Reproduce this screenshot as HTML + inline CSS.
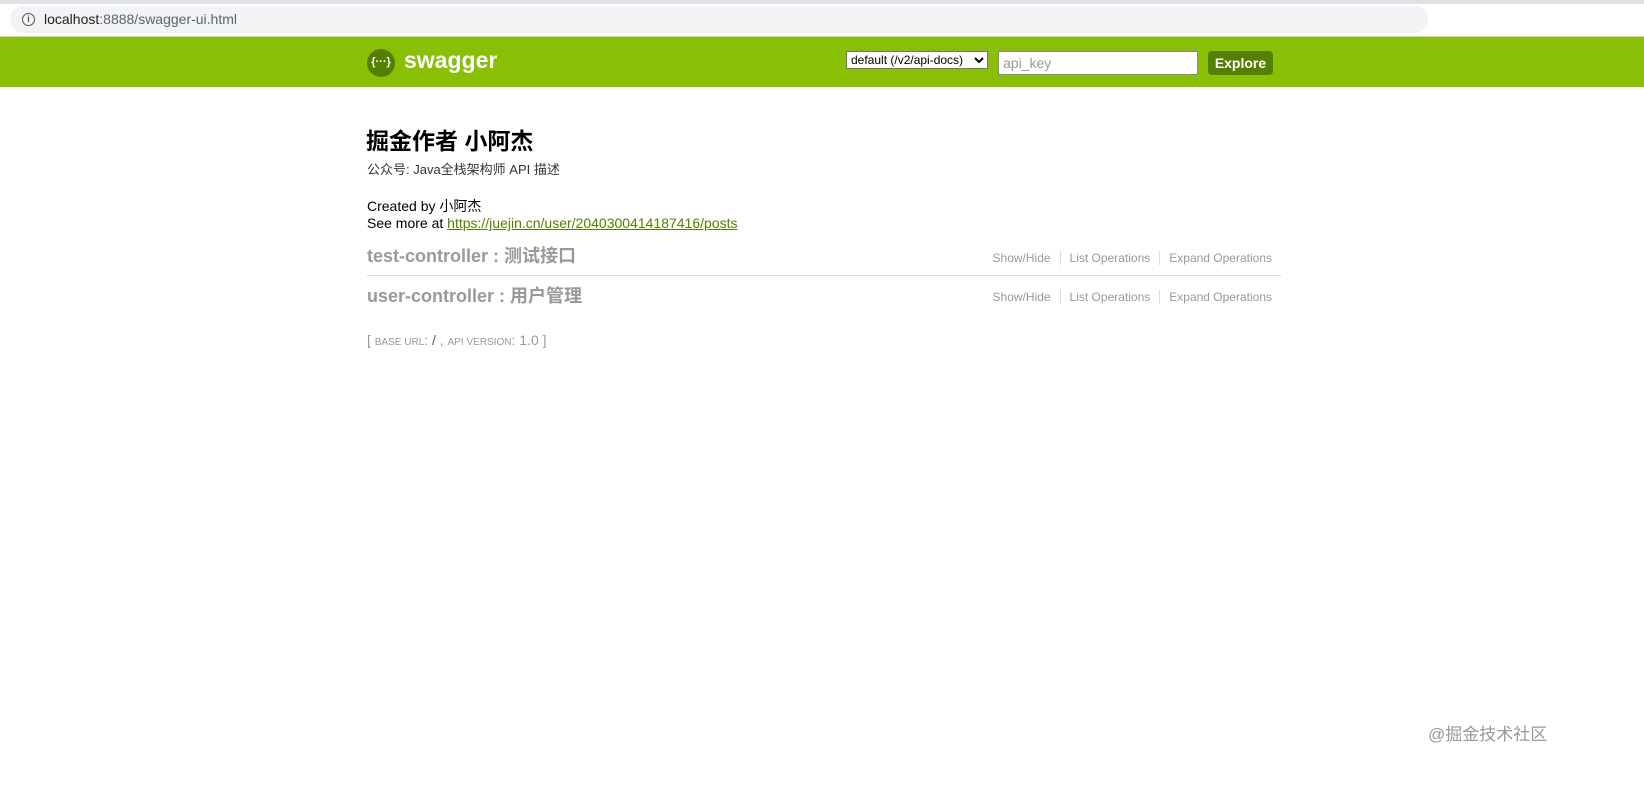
<!DOCTYPE html>
<html><head><meta charset="utf-8"><style>
*{margin:0;padding:0;box-sizing:border-box}
body{width:1644px;height:797px;background:#fff;font-family:"Liberation Sans","Noto Sans CJK SC",sans-serif;position:relative;overflow:hidden}
.chrome{position:absolute;left:0;top:0;width:1644px;height:37px;background:#fff;border-bottom:1px solid #d0d0d0}
.chrome .top{position:absolute;left:0;top:0;width:1644px;height:4px;background:#dee1e6}
.addr{position:absolute;left:10px;top:6px;width:1418px;height:27px;background:#f1f3f4;border-radius:14px}
.addr .i{position:absolute;left:12px;top:7px;width:13px;height:13px;border:1.3px solid #555;border-radius:50%;font-size:9px;text-align:center;line-height:11px;color:#555;font-weight:bold}
.addr .u{position:absolute;left:34px;top:5px;font-size:14px;color:#202124}
.addr .u span{color:#5f6368}
.hdr{position:absolute;left:0;top:37px;width:1644px;height:50px;background:#89bf04}
.logo{position:absolute;left:367px;top:49px;width:28px;height:28px;border-radius:50%;background:#547f00;color:#fff;font-size:11px;text-align:center;line-height:27px;font-weight:bold}
.brand{position:absolute;left:404px;top:47px;color:#fff;font-weight:bold;font-size:23px}
select{position:absolute;left:846px;top:51px;width:142px;height:18px;font-size:12px;font-family:"Liberation Sans",sans-serif;background:#fff;border:1px solid #777}
.key{position:absolute;left:998px;top:51px;width:200px;height:24px;background:#fff;border:1px solid #888;font-size:14px;color:#999;padding:3px 4px}
.btn{position:absolute;left:1208px;top:51px;width:65px;height:24px;background:#547f00;border-radius:4px;color:#fff;font-weight:bold;font-size:14px;text-align:center;line-height:24px}
h1{position:absolute;left:366px;top:122px;font-size:23px;font-weight:bold;color:#000}
.p{position:absolute;left:367px;font-size:14px;color:#333}
a{color:#547f00}
.res{position:absolute;left:367px;width:914px;height:38px}
.res .n{position:absolute;left:0;top:4px;font-size:18px;font-weight:bold;color:#999}
.ops{position:absolute;right:9px;top:13px;font-size:12px;color:#999}
.ops span{padding:0 9px;border-left:1px solid #ddd}
.ops span:first-child{border:none}
.ops span:last-child{padding-right:0}
.ver{position:absolute;left:367px;top:332px;font-size:14px;color:#999}
.sc{font-size:10px;text-transform:uppercase}
.wm{position:absolute;left:1428px;top:720px;font-size:17px;color:#999}
</style></head><body>
<div class="chrome"><div class="top"></div><div class="addr"><div class="i">i</div><div class="u">localhost<span>:8888/swagger-ui.html</span></div></div></div>
<div class="hdr"></div>
<div class="logo">{···}</div>
<div class="brand">swagger</div>
<select><option>default (/v2/api-docs)</option></select>
<div class="key">api_key</div>
<div class="btn">Explore</div>
<h1>掘金作者 小阿杰</h1>
<div class="p" style="top:159px;font-size:13px">公众号: Java全栈架构师 API 描述</div>
<div class="p" style="top:196px;color:#000">Created by 小阿杰</div>
<div class="p" style="top:215px;color:#000">See more at <a href="#">https://juejin.cn/user/2040300414187416/posts</a></div>
<div class="res" style="top:238px;border-bottom:1px solid #ddd"><div class="n">test-controller : 测试接口</div><div class="ops"><span>Show/Hide</span><span>List Operations</span><span>Expand Operations</span></div></div>
<div class="res" style="top:278px"><div class="n">user-controller : 用户管理</div><div class="ops" style="top:12px"><span>Show/Hide</span><span>List Operations</span><span>Expand Operations</span></div></div>
<div class="ver">[ <span class="sc">base url</span>: <span style="color:#555">/</span> , <span class="sc">api version</span>: 1.0 ]</div>
<div class="wm">@掘金技术社区</div>
</body></html>
